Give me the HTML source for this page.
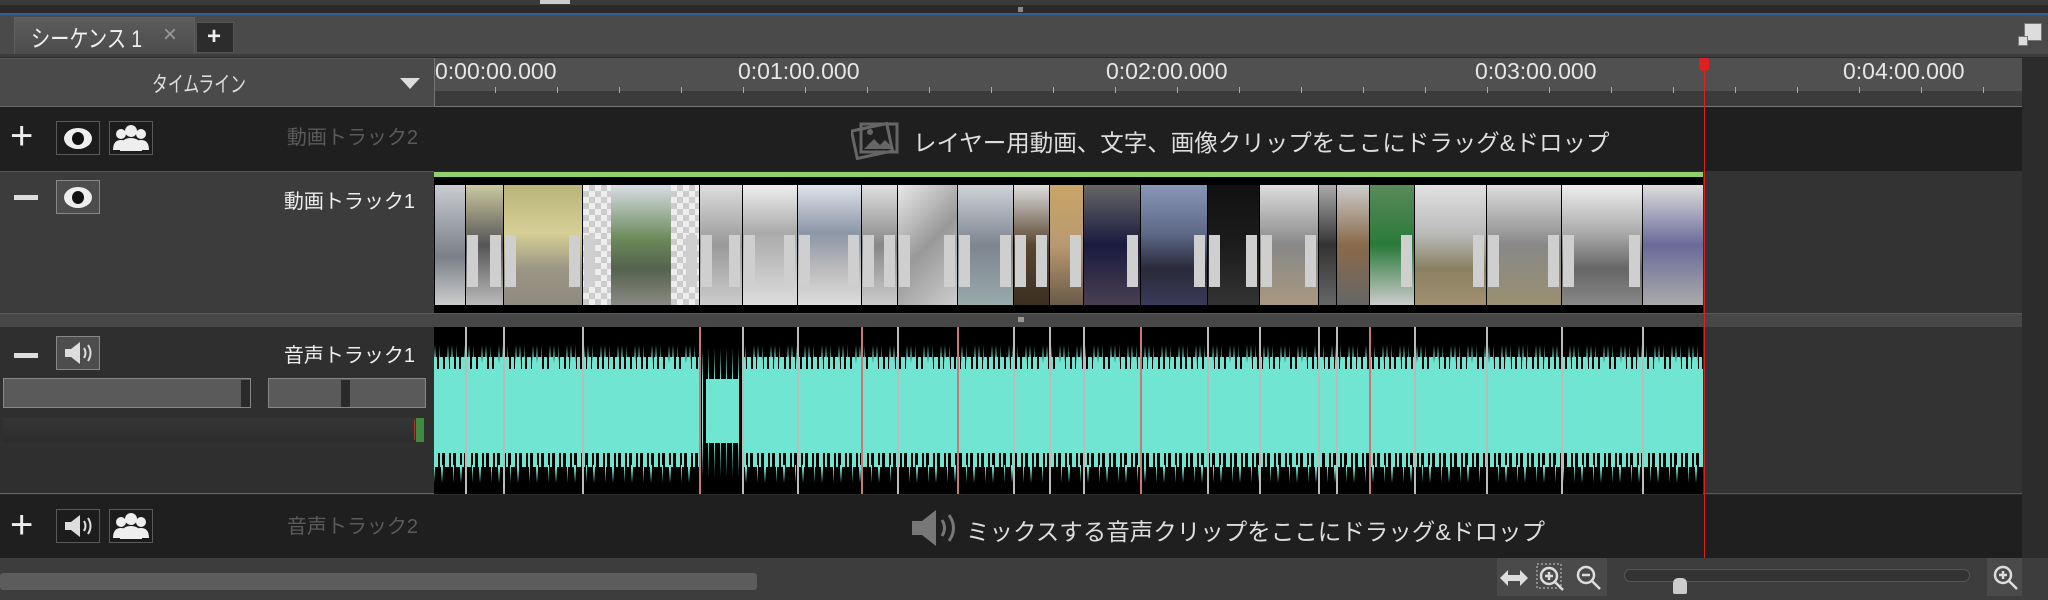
<!DOCTYPE html>
<html><head><meta charset="utf-8"><style>
*{margin:0;padding:0;box-sizing:border-box}
body{width:2048px;height:600px;background:#2a2a2a;position:relative;overflow:hidden;font-family:"Liberation Sans","Noto Sans CJK JP",sans-serif;color:#ddd}
.a{position:absolute}
.ib{position:absolute;width:44px;height:34px;border:1px solid #5a5a5a;background:#1c1c1c}
.eye{position:absolute;left:7px;top:6px;width:28px;height:21px;border-radius:50%;background:#eee}
.eye:after{content:"";position:absolute;left:8px;top:4px;width:12px;height:13px;border-radius:50%;background:#111}
.lbl{position:absolute;font-size:20px;text-align:right;width:200px}
.hdl{position:absolute;width:11px;height:52px;top:235px;background:#cfcfcf}
.clip{position:absolute;top:185px;height:120px}
.ln{position:absolute;width:2px;background:#bbb}
</style></head><body>
<div class="a" style="left:0;top:0;width:2048px;height:5px;background:#3a3a3a"></div>
<div class="a" style="left:540px;top:0;width:30px;height:4px;background:#ccc"></div>
<div class="a" style="left:1018px;top:7px;width:5px;height:5px;background:#888"></div>
<div class="a" style="left:0;top:13px;width:2048px;height:2px;background:#2f5f9a"></div>
<!-- tab bar -->
<div class="a" style="left:0;top:15px;width:2048px;height:40px;background:#4a4a4a"></div>
<div class="a" style="left:14px;top:17px;width:181px;height:37px;background:linear-gradient(#5c5c5c,#4c4c4c);border:1px solid #5f5f5f;border-bottom:none"></div>
<div class="a" style="left:31px;top:19px;font-size:24px;color:#f0f0f0;white-space:nowrap;transform:scaleX(.8);transform-origin:left">シーケンス 1</div>
<div class="a" style="left:163px;top:21px;font-size:24px;color:#999">×</div>
<div class="a" style="left:196px;top:22px;width:38px;height:31px;background:#2c2c2c;border:1px solid #555"></div>
<div class="a" style="left:207px;top:23px;font-size:24px;color:#eee;font-weight:bold">+</div>
<div class="a" style="left:0;top:54px;width:2048px;height:3px;background:#3d3d3d"></div>
<div class="a" style="left:2024px;top:23px;width:18px;height:18px;background:#ddd;border:1px solid #777"></div>
<div class="a" style="left:2018px;top:36px;width:10px;height:10px;background:#ddd;border:1px solid #777"></div>
<!-- ruler header -->
<div class="a" style="left:0;top:58px;width:434px;height:49px;background:#4a4a4a;border-top:1px solid #5a5a5a;border-bottom:1px solid #666"></div>
<div class="a" style="left:152px;top:67px;font-size:22px;color:#ddd;transform:scaleX(.72);transform-origin:left">タイムライン</div>
<div class="a" style="left:400px;top:78px;width:0;height:0;border-left:10px solid transparent;border-right:10px solid transparent;border-top:11px solid #ddd"></div>
<div class="a" style="left:434px;top:58px;width:1588px;height:33px;background:#505050"></div>
<div class="a" style="left:434px;top:91px;width:1588px;height:16px;background:#3b3b3b;border-bottom:1px solid #777"></div>
<div class="a" style="left:2022px;top:58px;width:26px;height:500px;background:#2c2c2c"></div>
<div class="a" style="left:434px;top:58px;width:1px;height:49px;background:#777"></div>
<div class="a" style="left:435px;top:58px;font-size:23px;color:#e6e6e6">0:00:00.000</div>
<div class="a" style="left:738px;top:58px;font-size:23px;color:#e6e6e6">0:01:00.000</div>
<div class="a" style="left:1106px;top:58px;font-size:23px;color:#e6e6e6">0:02:00.000</div>
<div class="a" style="left:1475px;top:58px;font-size:23px;color:#e6e6e6">0:03:00.000</div>
<div class="a" style="left:1843px;top:58px;font-size:23px;color:#e6e6e6">0:04:00.000</div>
<div class="a" style="left:434px;top:87px;width:1588px;height:6px;background:repeating-linear-gradient(90deg,transparent 0 61px,#aaa 61px 62px)"></div>
<!-- playhead -->
<div class="a" style="left:1699px;top:58px;width:10px;height:13px;background:#e02020;border-radius:2px 2px 4px 4px"></div>
<!-- video track 2 -->
<div class="a" style="left:0;top:107px;width:2022px;height:64px;background:#1f1f1f"></div>
<div class="a" style="left:10px;top:116px;font-size:40px;color:#eee;line-height:40px">+</div>
<div class="ib" style="left:56px;top:121px"><div class="eye"></div></div>
<div class="ib" style="left:109px;top:121px"><svg width="42" height="32" viewBox="0 0 42 32"><g fill="#eee"><circle cx="11" cy="12" r="5"/><circle cx="31" cy="12" r="5"/><circle cx="21" cy="9" r="6"/><path d="M3 28q0-10 8-10t8 10zM23 28q0-10 8-10t8 10z"/><path d="M10 29q0-13 11-13t11 13z"/></g></svg></div>
<div class="lbl" style="left:218px;top:121px;color:#5a5a5a">動画トラック2</div>
<svg class="a" style="left:851px;top:119px" width="50" height="42" viewBox="0 0 50 42"><g fill="none" stroke="#666" stroke-width="3"><rect x="3" y="8" width="36" height="28" transform="rotate(-12 21 22)"/><rect x="10" y="5" width="36" height="28"/></g><circle cx="19" cy="13" r="3" fill="#666"/><path d="M13 30l10-10 6 6 5-5 9 9z" fill="#666"/></svg>
<div class="a" style="left:913px;top:124px;font-size:23.5px;color:#ddd">レイヤー用動画、文字、画像クリップをここにドラッグ&amp;ドロップ</div>
<!-- video track 1 -->
<div class="a" style="left:0;top:171px;width:434px;height:142px;background:#3c3c3c;border-top:1px solid #555"></div>
<div class="a" style="left:14px;top:195px;width:24px;height:5px;background:#ddd"></div>
<div class="ib" style="left:56px;top:180px;background:#4d4d4d;border-color:#888"><div class="eye"></div></div>
<div class="lbl" style="left:215px;top:185px;color:#eee">動画トラック1</div>
<div class="a" style="left:1703px;top:171px;width:319px;height:142px;background:#333"></div>
<div class="a" style="left:434px;top:172px;width:1269px;height:141px;background:#000"></div>
<div class="a" style="left:434px;top:172px;width:1269px;height:5px;background:#8fd16a"></div>
<div class="clip" style="left:435px;width:30px;background:linear-gradient(#c9ccd0,#7a8088 60%,#ccc)"></div>
<div class="clip" style="left:466px;width:37px;background:linear-gradient(#cbc9a0,#555 50%,#bbb)"></div>
<div class="clip" style="left:504px;width:78px;background:linear-gradient(#b8b47a,#d6cf96 40%,#9a9684 70%,#8f8a80)"></div>
<div class="clip" style="left:583px;width:28px;background:repeating-conic-gradient(#ccc 0 25%,#eee 0 50%) 0 0/12px 12px"></div>
<div class="clip" style="left:611px;width:60px;background:linear-gradient(#d8dde4,#6b8a5a 45%,#55624f 70%,#8a8a84)"></div>
<div class="clip" style="left:671px;width:28px;background:repeating-conic-gradient(#ccc 0 25%,#eee 0 50%) 0 0/12px 12px"></div>
<div class="clip" style="left:700px;width:42px;background:linear-gradient(#ddd,#999 50%,#ccc)"></div>
<div class="clip" style="left:743px;width:54px;background:linear-gradient(#eee,#aaa 40%,#ddd)"></div>
<div class="clip" style="left:798px;width:63px;background:linear-gradient(#dfe3ea,#8c96a6 40%,#bbb 70%,#ddd)"></div>
<div class="clip" style="left:862px;width:35px;background:linear-gradient(#e0e0e0,#888 50%,#ccc)"></div>
<div class="clip" style="left:898px;width:59px;background:linear-gradient(135deg,#e8e8e8,#999 50%,#ccc)"></div>
<div class="clip" style="left:958px;width:55px;background:linear-gradient(#cfd3d8,#7d8590 50%,#9aa)"></div>
<div class="clip" style="left:1014px;width:35px;background:linear-gradient(#ddd,#5a4630 50%,#3b2f22)"></div>
<div class="clip" style="left:1050px;width:33px;background:linear-gradient(#caa468,#b89a70 50%,#6a5a48)"></div>
<div class="clip" style="left:1084px;width:56px;background:linear-gradient(#666,#1a1a40 50%,#4a3f50)"></div>
<div class="clip" style="left:1141px;width:66px;background:linear-gradient(#8a96b8,#5e6a88 40%,#2a2a3a 70%,#3a3a5a)"></div>
<div class="clip" style="left:1208px;width:51px;background:linear-gradient(#111,#1c1c1c 50%,#333)"></div>
<div class="clip" style="left:1260px;width:58px;background:linear-gradient(#ddd,#888 50%,#a89880)"></div>
<div class="clip" style="left:1319px;width:17px;background:linear-gradient(#aaa,#333 50%,#666)"></div>
<div class="clip" style="left:1337px;width:32px;background:linear-gradient(#ccc,#8a6a4a 50%,#666)"></div>
<div class="clip" style="left:1370px;width:44px;background:linear-gradient(#5a8a5a,#2a7a3a 50%,#ccc)"></div>
<div class="clip" style="left:1415px;width:71px;background:linear-gradient(#e0e0e0,#bbb 40%,#8a8060 70%,#a09070)"></div>
<div class="clip" style="left:1487px;width:74px;background:linear-gradient(#ddd,#888 50%,#9a9070)"></div>
<div class="clip" style="left:1562px;width:80px;background:linear-gradient(#eee,#aaa 40%,#666 70%,#888)"></div>
<div class="clip" style="left:1643px;width:60px;background:linear-gradient(#ddd,#6a6a9a 50%,#aaa)"></div>
<div class="hdl" style="left:467px"></div><div class="hdl" style="left:490px"></div>
<div class="hdl" style="left:505px"></div><div class="hdl" style="left:569px"></div>
<div class="hdl" style="left:584px"></div><div class="hdl" style="left:686px"></div>
<div class="hdl" style="left:701px"></div><div class="hdl" style="left:729px"></div>
<div class="hdl" style="left:744px"></div><div class="hdl" style="left:784px"></div>
<div class="hdl" style="left:799px"></div><div class="hdl" style="left:848px"></div>
<div class="hdl" style="left:863px"></div><div class="hdl" style="left:884px"></div>
<div class="hdl" style="left:899px"></div><div class="hdl" style="left:944px"></div>
<div class="hdl" style="left:959px"></div><div class="hdl" style="left:1000px"></div>
<div class="hdl" style="left:1015px"></div><div class="hdl" style="left:1036px"></div>
<div class="hdl" style="left:1070px"></div>
<div class="hdl" style="left:1127px"></div>
<div class="hdl" style="left:1194px"></div><div class="hdl" style="left:1209px"></div>
<div class="hdl" style="left:1246px"></div><div class="hdl" style="left:1261px"></div>
<div class="hdl" style="left:1305px"></div>
<div class="hdl" style="left:1401px"></div>
<div class="hdl" style="left:1473px"></div><div class="hdl" style="left:1488px"></div>
<div class="hdl" style="left:1548px"></div><div class="hdl" style="left:1563px"></div>
<div class="hdl" style="left:1629px"></div>
<!-- separator -->
<div class="a" style="left:0;top:313px;width:2022px;height:14px;background:#474747;border-top:1px solid #5a5a5a"></div>
<div class="a" style="left:1018px;top:317px;width:6px;height:5px;background:#999"></div>
<!-- audio track 1 -->
<div class="a" style="left:0;top:327px;width:434px;height:167px;background:#2f2f2f;border-bottom:1px solid #666"></div>
<div class="a" style="left:1703px;top:327px;width:319px;height:167px;background:#333;border-bottom:1px solid #555"></div>
<div class="a" style="left:14px;top:353px;width:24px;height:5px;background:#ddd"></div>
<div class="ib" style="left:56px;top:336px;background:#4d4d4d;border-color:#888"><svg width="42" height="32" viewBox="0 0 42 32"><path d="M8 12h6l9-7v22l-9-7H8z" fill="#ddd"/><path d="M27 11q3 5 0 10M31 8q5 8 0 16" stroke="#ddd" stroke-width="2" fill="none"/></svg></div>
<div class="lbl" style="left:215px;top:339px;color:#eee">音声トラック1</div>
<div class="a" style="left:3px;top:378px;width:248px;height:30px;background:#5a5a5a;border:1px solid #888"></div>
<div class="a" style="left:241px;top:380px;width:9px;height:27px;background:#2a2a2a"></div>
<div class="a" style="left:268px;top:378px;width:158px;height:30px;background:#5a5a5a;border:1px solid #888"></div>
<div class="a" style="left:341px;top:380px;width:9px;height:27px;background:#2a2a2a"></div>
<div class="a" style="left:3px;top:418px;width:420px;height:24px;background:linear-gradient(#363636,#2c2c2c)"></div>
<div class="a" style="left:416px;top:418px;width:8px;height:24px;background:#3e8a3e"></div>
<div class="a" style="left:414px;top:420px;width:1px;height:20px;background:#a33"></div>
<div class="a" style="left:434px;top:327px;width:1269px;height:167px;background:#000;overflow:hidden">
 <div class="a" style="left:0;top:42px;width:1269px;height:84px;background:#6fe5d2"></div>
 <div class="a" style="left:0;top:18px;width:1269px;height:26px;background:repeating-linear-gradient(90deg,#6fe5d2 0 2px,transparent 2px 5px,#6fe5d2 5px 6px,transparent 6px 13px,#6fe5d2 13px 15px,transparent 15px 17px);-webkit-mask:linear-gradient(transparent,#000 70%)"></div>
 <div class="a" style="left:0;top:30px;width:1269px;height:14px;background:repeating-linear-gradient(90deg,#6fe5d2 0 3px,transparent 3px 5px,#6fe5d2 5px 9px,transparent 9px 11px)"></div>
 <div class="a" style="left:0;top:124px;width:1269px;height:16px;background:repeating-linear-gradient(90deg,#6fe5d2 0 4px,transparent 4px 6px,#6fe5d2 6px 8px,transparent 8px 11px)"></div>
 <div class="a" style="left:0;top:138px;width:1269px;height:18px;background:repeating-linear-gradient(90deg,#6fe5d2 0 1px,transparent 1px 7px,#6fe5d2 7px 9px,transparent 9px 19px);-webkit-mask:linear-gradient(#000 20%,transparent)"></div>
 <div class="a" style="left:266px;top:0;width:42px;height:167px;background:#000"></div>
 <div class="a" style="left:268px;top:5px;width:38px;height:158px;background:repeating-linear-gradient(90deg,#6fe5d2 0 1px,transparent 1px 6px);-webkit-mask:linear-gradient(transparent 10%,#000 30%,#000 70%,transparent 92%)"></div>
 <div class="a" style="left:272px;top:52px;width:32px;height:64px;background:#6fe5d2"></div>
</div>
<div class="ln" style="left:465px;top:327px;height:167px"></div>
<div class="ln" style="left:503px;top:327px;height:167px"></div>
<div class="ln" style="left:582px;top:327px;height:167px"></div>
<div class="ln" style="left:699px;top:327px;height:167px;background:#c77"></div>
<div class="ln" style="left:742px;top:327px;height:167px"></div>
<div class="ln" style="left:797px;top:327px;height:167px"></div>
<div class="ln" style="left:861px;top:327px;height:167px;background:#c77"></div>
<div class="ln" style="left:897px;top:327px;height:167px"></div>
<div class="ln" style="left:957px;top:327px;height:167px;background:#c77"></div>
<div class="ln" style="left:1013px;top:327px;height:167px"></div>
<div class="ln" style="left:1049px;top:327px;height:167px"></div>
<div class="ln" style="left:1083px;top:327px;height:167px"></div>
<div class="ln" style="left:1140px;top:327px;height:167px;background:#c77"></div>
<div class="ln" style="left:1207px;top:327px;height:167px"></div>
<div class="ln" style="left:1259px;top:327px;height:167px"></div>
<div class="ln" style="left:1318px;top:327px;height:167px"></div>
<div class="ln" style="left:1336px;top:327px;height:167px"></div>
<div class="ln" style="left:1369px;top:327px;height:167px;background:#c77"></div>
<div class="ln" style="left:1414px;top:327px;height:167px"></div>
<div class="ln" style="left:1486px;top:327px;height:167px"></div>
<div class="ln" style="left:1561px;top:327px;height:167px"></div>
<div class="ln" style="left:1642px;top:327px;height:167px"></div>
<!-- audio track 2 -->
<div class="a" style="left:0;top:495px;width:2022px;height:63px;background:#1f1f1f"></div>
<div class="a" style="left:10px;top:505px;font-size:40px;color:#eee;line-height:40px">+</div>
<div class="ib" style="left:56px;top:509px"><svg width="42" height="32" viewBox="0 0 42 32"><path d="M8 12h6l9-7v22l-9-7H8z" fill="#ddd"/><path d="M27 11q3 5 0 10M31 8q5 8 0 16" stroke="#ddd" stroke-width="2" fill="none"/></svg></div>
<div class="ib" style="left:109px;top:509px"><svg width="42" height="32" viewBox="0 0 42 32"><g fill="#eee"><circle cx="11" cy="12" r="5"/><circle cx="31" cy="12" r="5"/><circle cx="21" cy="9" r="6"/><path d="M3 28q0-10 8-10t8 10zM23 28q0-10 8-10t8 10z"/><path d="M10 29q0-13 11-13t11 13z"/></g></svg></div>
<div class="lbl" style="left:218px;top:510px;color:#5a5a5a">音声トラック2</div>
<svg class="a" style="left:908px;top:506px" width="54" height="44" viewBox="0 0 54 44"><path d="M4 15h10l14-11v36L14 29H4z" fill="#777"/><path d="M34 14q5 8 0 16M41 9q9 13 0 26" stroke="#777" stroke-width="3" fill="none"/></svg>
<div class="a" style="left:966px;top:513px;font-size:23.5px;color:#ddd">ミックスする音声クリップをここにドラッグ&amp;ドロップ</div>
<div class="a" style="left:1704px;top:58px;width:1px;height:500px;background:#e02020"></div>
<!-- bottom bar -->
<div class="a" style="left:0;top:558px;width:2048px;height:42px;background:#3d3d3d"></div>
<div class="a" style="left:0;top:573px;width:757px;height:17px;background:#5c5c5c;border-radius:3px"></div>
<div class="a" style="left:1497px;top:558px;width:110px;height:38px;background:#4a4a4a"></div>
<svg class="a" style="left:1498px;top:566px" width="32" height="24" viewBox="0 0 32 24"><path d="M2 12l8-8v5h12V4l8 8-8 8v-5H10v5z" fill="#ddd"/></svg>
<svg class="a" style="left:1534px;top:561px" width="34" height="34" viewBox="0 0 34 34"><rect x="3" y="3" width="24" height="24" fill="none" stroke="#ccc" stroke-dasharray="2 2"/><circle cx="15" cy="15" r="8" fill="none" stroke="#ddd" stroke-width="2.5"/><path d="M21 21l8 8M11 15h8M15 11v8" stroke="#ddd" stroke-width="2.5"/></svg>
<svg class="a" style="left:1572px;top:561px" width="34" height="34" viewBox="0 0 34 34"><circle cx="14" cy="14" r="8" fill="none" stroke="#ddd" stroke-width="2.5"/><path d="M20 20l8 8M10 14h8" stroke="#ddd" stroke-width="2.5"/></svg>
<div class="a" style="left:1624px;top:569px;width:346px;height:13px;background:#333;border:1px solid #555;border-radius:7px"></div>
<div class="a" style="left:1673px;top:578px;width:14px;height:16px;background:#ccc;border-radius:5px 5px 2px 2px"></div>
<div class="a" style="left:1987px;top:558px;width:35px;height:38px;background:#4a4a4a"></div>
<svg class="a" style="left:1989px;top:561px" width="34" height="34" viewBox="0 0 34 34"><circle cx="14" cy="14" r="8" fill="none" stroke="#ddd" stroke-width="2.5"/><path d="M20 20l8 8M10 14h8M14 10v8" stroke="#ddd" stroke-width="2.5"/></svg>
</body></html>
